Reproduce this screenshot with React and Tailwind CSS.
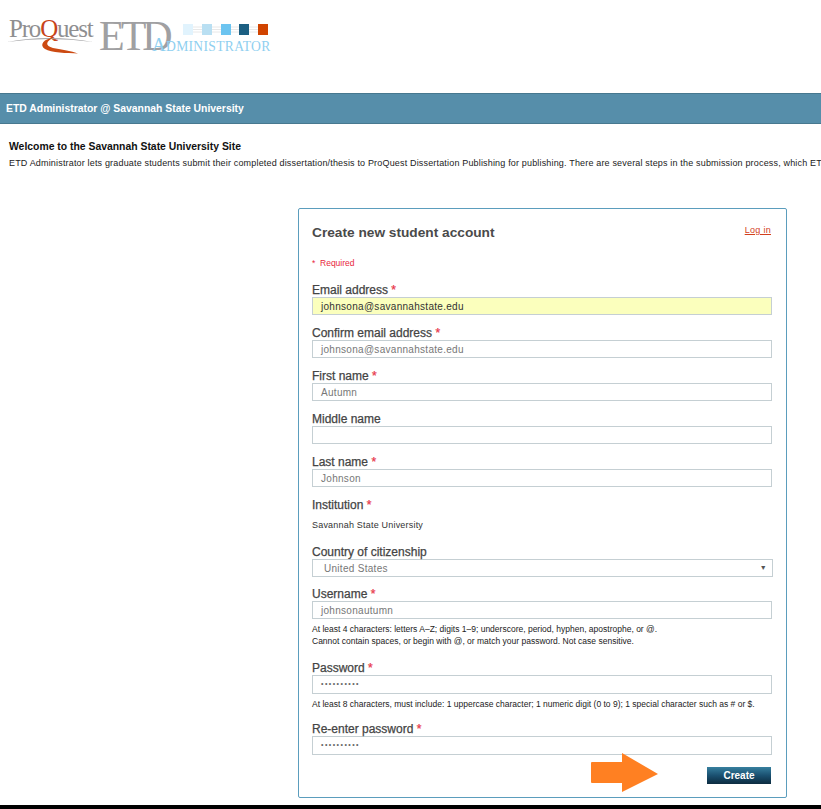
import React from 'react';

const SANS = "font-['Liberation_Sans',Arial,sans-serif]";

const Label = ({ children, required }) => (
    <div className="h-[21px] pt-[7px] text-[12px] leading-[14px] text-[#444] [-webkit-text-stroke:0.25px_#444]">
        {children}
        {required && <span className="text-[#e8374a] [-webkit-text-stroke:0.25px_#e8374a]"> *</span>}
    </div>
);

const TextBox = ({ value, bg = 'bg-white', color = 'text-[#777]', h = 'h-[18px]', dots }) => (
    <div className={`${h} ${bg} ${color} border border-[#c5cfd3] pl-[8px] flex items-center text-[10px] tracking-[0.29px]`}>
        {dots ? <span className="text-[7px] tracking-[1.45px]">{value}</span> : value}
    </div>
);

const Field = ({ label, required, value, ...rest }) => (
    <div className="mb-[4px]">
        <Label required={required}>{label}</Label>
        <TextBox value={value} {...rest} />
    </div>
);

const Hint = ({ children, className = '' }) => (
    <p className={`text-[8.5px] leading-[12px] text-[#222] ${className}`}>{children}</p>
);

const Logo = () => (
    <div className="flex items-start pl-[9px] pt-[15px] h-[93px]">
        <div className="relative w-[90px] h-[40px]">
            <span className="font-['Liberation_Serif',serif] text-[25px] leading-[28px] text-[#8f8f91] tracking-[-1.2px]">
                Pro<span className="text-[#c8441a]">Q</span>uest
            </span>
            <svg className="absolute left-[-2px] top-[20px]" width="90" height="22" viewBox="0 0 90 22">
                <path d="M0 7 Q 42 -1 86 7 Q 42 1 0 7Z" fill="#a3a3a5" />
                <path d="M48 2 C 38 6 38 11 46 13 C 56 15 64 16 71 18.5 C 60 18 44 18 38 14 C 32 10 36 4 48 2Z" fill="#cc4a12" />
            </svg>
        </div>
        <div className="font-['Liberation_Serif',serif] text-[42px] leading-[42px] text-[#a0a0a2] tracking-[-4px] w-[53px]">ETD</div>
        <div className="mt-[9px]">
            <svg width="90" height="11" viewBox="0 0 90 11" className="ml-[31px]">
                <path d="M0 3h85M0 5.5h85M0 8h85" stroke="#e8e8e8" strokeWidth="1" />
                <rect x="0" y="0" width="10" height="11" fill="#e1f3fd" />
                <rect x="19" y="0" width="10" height="11" fill="#b9dff2" />
                <rect x="38" y="0" width="10" height="11" fill="#6cc4f0" />
                <rect x="56" y="0" width="10" height="11" fill="#1c5f82" />
                <rect x="75" y="0" width="10" height="11" fill="#d14400" />
            </svg>
            <div className="font-['Liberation_Serif',serif] text-[13.6px] leading-[16px] text-[#8fcff0] mt-[2px] tracking-[0.3px] whitespace-nowrap">
                <span className="text-[19px]">A</span>DMINISTRATOR
            </div>
        </div>
    </div>
);

const App = () => {
    return (
        <div className={`relative w-[821px] h-[809px] overflow-hidden bg-white ${SANS}`}>
            <Logo />

            {/* Site band */}
            <div className="h-[31px] bg-[#568eaa] border-y border-[#47788f] pl-[6px] flex items-center text-[10.4px] font-bold text-white">
                ETD Administrator @ Savannah State University
            </div>

            {/* Welcome */}
            <div className="pl-[9px] pt-[16px] whitespace-nowrap">
                <h1 className="text-[10.4px] leading-[14px] font-bold text-[#111]">Welcome to the Savannah State University Site</h1>
                <p className="mt-[3px] text-[9px] leading-[12px] text-[#222] tracking-[0.17px]">
                    ETD Administrator lets graduate students submit their completed dissertation/thesis to ProQuest Dissertation Publishing for publishing. There are several steps in the submission process, which ETD Administrator
                </p>
            </div>

            {/* Form card */}
            <div className="ml-[298px] mt-[39px] w-[489px] h-[590px] border border-[#5b9dbd] rounded-[2px] px-[13px] relative">
                <div className="flex justify-between items-start pt-[15px] h-[40px]">
                    <h2 className="text-[13.7px] leading-[18px] font-bold text-[#4a4a4a]">Create new student account</h2>
                    <a className="mr-[2px] text-[9px] leading-[12px] text-[#d2401c] underline tracking-[0.3px]">Log in</a>
                </div>
                <div className="mt-[8px] h-[19px] text-[8.5px] leading-[12px] text-[#e8263c]">*&nbsp; Required</div>
                <div className="w-[460px]">
                    <Field label="Email address" required value="johnsona@savannahstate.edu" bg="bg-[#fbffbd]" color="text-[#333]" />
                    <Field label="Confirm email address" required value="johnsona@savannahstate.edu" />
                    <Field label="First name" required value="Autumn" />
                    <Field label="Middle name" value="" />
                    <Field label="Last name" required value="Johnson" />

                    <Label required>Institution</Label>
                    <div className="h-[26px] pt-[7px] text-[9px] leading-[12px] text-[#333] tracking-[0.2px]">Savannah State University</div>

                    <Label>Country of citizenship</Label>
                    <div className="w-[461px] h-[18px] mb-[3px] border border-[#c5cfd3] pl-[11px] pr-[5px] flex items-center justify-between text-[10px] tracking-[0.29px] text-[#777]">
                        United States
                        <span className="text-[7px] text-[#555]">▼</span>
                    </div>

                    <Label required>Username</Label>
                    <TextBox value="johnsonautumn" />
                    <Hint className="mt-[4px]">At least 4 characters: letters A–Z; digits 1–9; underscore, period, hyphen, apostrophe, or @.</Hint>
                    <Hint>Cannot contain spaces, or begin with @, or match your password. Not case sensitive.</Hint>

                    <div className="h-[7px]" />
                    <Label required>Password</Label>
                    <TextBox value="••••••••••" h="h-[19px]" color="text-[#666]" dots />
                    <Hint className="mt-[4px]">At least 8 characters, must include: 1 uppercase character; 1 numeric digit (0 to 9); 1 special character such as # or $.</Hint>

                    <div className="h-[5px]" />
                    <Label required>Re-enter password</Label>
                    <TextBox value="••••••••••" h="h-[19px]" color="text-[#666]" dots />

                    <div className="flex justify-end mt-[12px]">
                        <button className="w-[64px] h-[17px] mr-[1px] bg-gradient-to-b from-[#37809f] via-[#1a5070] to-[#0c2c40] text-[10px] font-bold text-white">Create</button>
                    </div>
                </div>
            </div>

            {/* Annotation arrow */}
            <svg className="absolute left-[590px] top-[752px]" width="70" height="41" viewBox="0 0 70 41">
                <path d="M2 10 H32 V1 L68 22 L32 40 V31 H2 Q1 31 1 30 V11 Q1 10 2 10Z" fill="#ff8022" />
            </svg>

            {/* Bottom edge */}
            <div className="absolute left-0 right-0 bottom-0 h-[4px] bg-black" />
        </div>
    );
};

export default App;
